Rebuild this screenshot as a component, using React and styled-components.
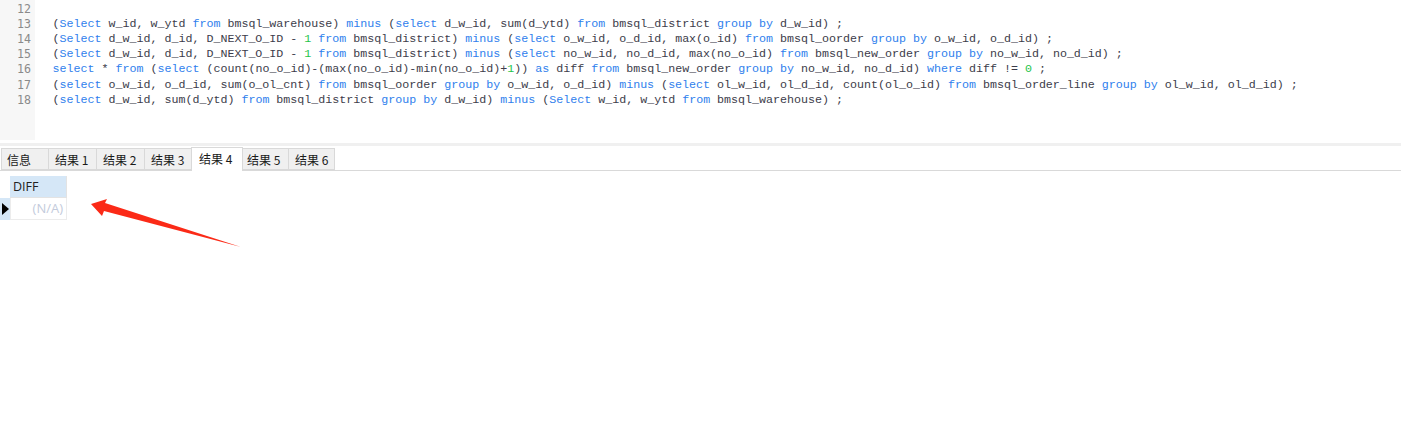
import React from "react";
import styled, { createGlobalStyle } from "styled-components";

const Global = createGlobalStyle`
  html, body { margin: 0; padding: 0; background: #fff; }
  body { width: 1401px; height: 436px; overflow: hidden; font-family: "Noto Sans CJK SC", "Noto Sans", sans-serif; }
`;
const Page = styled.div`position: relative; width: 1401px; height: 436px; overflow: hidden; background: #fff;`;
const Editor = styled.div`display: flex; height: 140px; overflow: hidden;`;
const Gutter = styled.div`
  width: 35px; flex: none; box-sizing: border-box; background: #f7f7f7; color: #8a8a8a;
  margin-top: -13px; height: 153px; text-align: right; padding-right: 4px;
  font: 11.6px/15px "DejaVu Sans Mono", monospace;
`;
const GutterLine = styled.div`height: 15.1px;`;
const Code = styled.div`
  flex: 1; padding: 0 0 0 17.5px; margin-top: -13px;
  font: 11.67px/15px "Liberation Mono", monospace; color: #3c3c4a; white-space: pre;
`;
const Line = styled.div`height: 15.1px;`;
const Kw = styled.span`color: #2f80ed;`;
const Num = styled.span`color: #1fc44b;`;
const Divider = styled.div`height: 3px; margin-top: 3px; background: #f0f0f0;`;
const TabBar = styled.div`
  display: flex; align-items: flex-end; height: 25px; box-sizing: border-box; padding-left: 1px;
  border-bottom: 1px solid #d9d9d9;
`;
const Tab = styled.div`
  box-sizing: border-box; width: ${p => p.$w}px; height: ${p => p.$active ? 24 : 22}px;
  margin-bottom: ${p => p.$active ? -1 : 0}px;
  display: flex; align-items: center; padding-left: ${p => p.$pad}px;
  font-size: 12px; color: #1a1a1a; padding-bottom: ${p => p.$active ? 2 : 0}px;
  background: ${p => p.$active ? "#fff" : "#f0f0f0"};
  border: 1px solid #d9d9d9; border-bottom: ${p => p.$active ? "none" : "1px solid #d9d9d9"};
  margin-left: -1px; position: relative; z-index: ${p => p.$active ? 1 : 0};
  &:first-child { margin-left: 0; }
`;
const Grid = styled.div`
  display: grid; grid-template-columns: 10px 57px; grid-template-rows: 22px 22px; margin-top: 5px; width: 67px;
`;
const Corner = styled.div`background: #fff;`;
const Header = styled.div`
  background: #d5e7f7; border: 1px solid #e3e3e3; border-width: 0 1px 1px 0; box-sizing: border-box;
  font: 12.5px/21px "Open Sans", sans-serif; color: #222; padding-left: 3px;
`;
const RowHead = styled.div`background: #d5e7f7; display: flex; align-items: center;`;
const Cell = styled.div`
  box-sizing: border-box; border: 1px solid #ececec; border-width: 0 1px 1px 1px;
  font: 13px/21px "Open Sans", sans-serif; color: #c3cbdc; text-align: right; padding-right: 3px;
`;
const Arrow = styled.svg`position: absolute; left: 85px; top: 192px;`;

const K = ({ children }) => <Kw>{children}</Kw>;
const lines = [
  <>(<K>Select</K> w_id, w_ytd <K>from</K> bmsql_warehouse) <K>minus</K> (<K>select</K> d_w_id, sum(d_ytd) <K>from</K> bmsql_district <K>group by</K> d_w_id) ;</>,
  <>(<K>Select</K> d_w_id, d_id, D_NEXT_O_ID - <Num>1</Num> <K>from</K> bmsql_district) <K>minus</K> (<K>select</K> o_w_id, o_d_id, max(o_id) <K>from</K> bmsql_oorder <K>group by</K> o_w_id, o_d_id) ;</>,
  <>(<K>Select</K> d_w_id, d_id, D_NEXT_O_ID - <Num>1</Num> <K>from</K> bmsql_district) <K>minus</K> (<K>select</K> no_w_id, no_d_id, max(no_o_id) <K>from</K> bmsql_new_order <K>group by</K> no_w_id, no_d_id) ;</>,
  <><K>select</K> * <K>from</K> (<K>select</K> (count(no_o_id)-(max(no_o_id)-min(no_o_id)+<Num>1</Num>)) <K>as</K> diff <K>from</K> bmsql_new_order <K>group by</K> no_w_id, no_d_id) <K>where</K> diff != <Num>0</Num> ;</>,
  <>(<K>select</K> o_w_id, o_d_id, sum(o_ol_cnt) <K>from</K> bmsql_oorder <K>group by</K> o_w_id, o_d_id) <K>minus</K> (<K>select</K> ol_w_id, ol_d_id, count(ol_o_id) <K>from</K> bmsql_order_line <K>group by</K> ol_w_id, ol_d_id) ;</>,
  <>(<K>select</K> d_w_id, sum(d_ytd) <K>from</K> bmsql_district <K>group by</K> d_w_id) <K>minus</K> (<K>Select</K> w_id, w_ytd <K>from</K> bmsql_warehouse) ;</>,
];
const tabs = [["信息", 48, 5], ["结果 1", 49, 6], ["结果 2", 49, 6], ["结果 3", 48, 6], ["结果 4", 52, 7], ["结果 5", 47, 4], ["结果 6", 47, 6]];

export default function App() {
  return (
    <Page>
      <Global />
      <Editor>
        <Gutter>
          {[11, 12, 13, 14, 15, 16, 17, 18].map((n, i) => <GutterLine key={n}>{i === 0 ? "" : n}</GutterLine>)}
        </Gutter>
        <Code>
          <Line>{"             ()         , _"}</Line>
          <Line />
          {lines.map((l, i) => <Line key={i}>{l}</Line>)}
        </Code>
      </Editor>
      <Divider />
      <TabBar>
        {tabs.map(([t, w, pad]) => <Tab key={t} $w={w} $pad={pad} $active={t === "结果 4"}>{t}</Tab>)}
      </TabBar>
      <Grid>
        <Corner />
        <Header>DIFF</Header>
        <RowHead>
          <svg width="10" height="14" viewBox="0 0 10 14"><path d="M2 1 L9 7 L2 13 Z" fill="#000" /></svg>
        </RowHead>
        <Cell>(N/A)</Cell>
      </Grid>
      <Arrow width="160" height="62" viewBox="0 0 160 62">
        <path d="M6 12 L22 7 L20 11 L156 55 L19 19 L17 24 Z" fill="#fb2a17" />
      </Arrow>
    </Page>
  );
}
